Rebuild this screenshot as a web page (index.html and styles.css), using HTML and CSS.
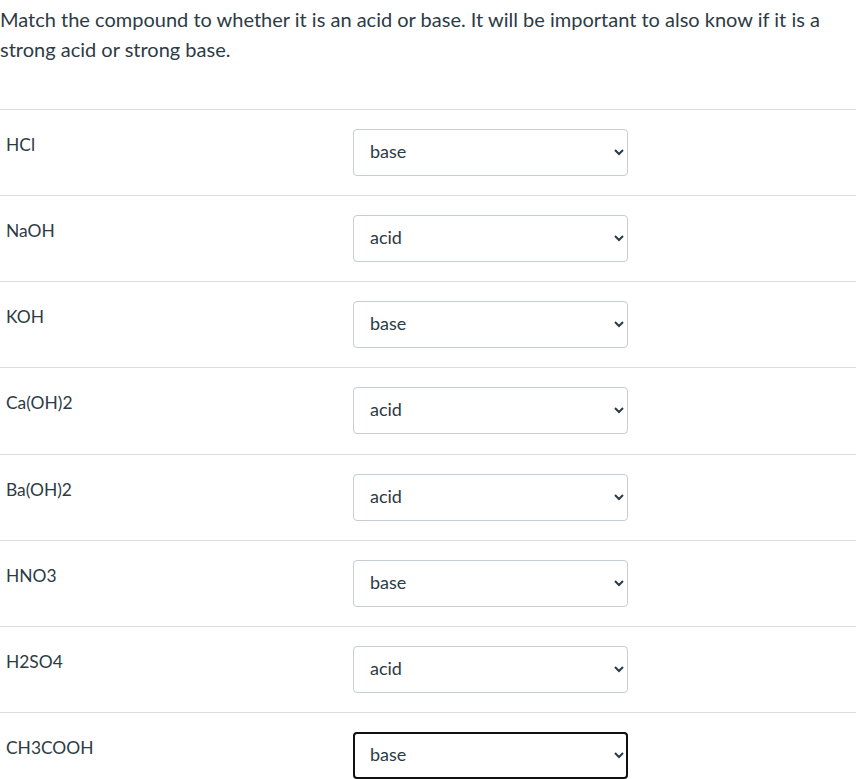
FILE: index.html
```html
<!DOCTYPE html>
<html lang="en">
<head>
    <meta charset="UTF-8">
    <meta name="viewport" content="width=device-width, initial-scale=1.0">
    <title>Matching Question</title>
    <link rel="stylesheet" href="styles.css">
</head>
<body>
    <div class="question">
        <div class="question-text">
            Match the compound to whether it is an acid or base. It will be important to also know if it is a strong acid or strong base.
        </div>
        <div class="answers">
            <div class="answer-row">
                <div class="answer-label">HCl</div>
                <select class="answer-select">
                    <option>base</option><option>acid</option>
                </select>
            </div>
            <div class="answer-row">
                <div class="answer-label">NaOH</div>
                <select class="answer-select">
                    <option>acid</option><option>base</option>
                </select>
            </div>
            <div class="answer-row">
                <div class="answer-label">KOH</div>
                <select class="answer-select">
                    <option>base</option><option>acid</option>
                </select>
            </div>
            <div class="answer-row">
                <div class="answer-label">Ca(OH)2</div>
                <select class="answer-select">
                    <option>acid</option><option>base</option>
                </select>
            </div>
            <div class="answer-row">
                <div class="answer-label">Ba(OH)2</div>
                <select class="answer-select">
                    <option>acid</option><option>base</option>
                </select>
            </div>
            <div class="answer-row">
                <div class="answer-label">HNO3</div>
                <select class="answer-select">
                    <option>base</option><option>acid</option>
                </select>
            </div>
            <div class="answer-row">
                <div class="answer-label">H2SO4</div>
                <select class="answer-select">
                    <option>acid</option><option>base</option>
                </select>
            </div>
            <div class="answer-row">
                <div class="answer-label">CH3COOH</div>
                <select class="answer-select focused">
                    <option>base</option><option>acid</option>
                </select>
            </div>
        </div>
    </div>
</body>
</html>
```
FILE: styles.css
```css
body {
    font-family: Lato, "Open Sans", sans-serif;
    margin: 0;
    color: #2d3b45;
    background-color: white;
}
.question-text {
    font-size: 20px;
    line-height: 30px;
    padding-top: 4px;
}
.answers {
    margin-top: 45px;
}
.answer-row {
    display: grid;
    grid-template-columns: 353px 275px;
    border-top: 1px solid #dddddd;
    padding: 19px 0 19px 0;
    height: 86.15px;
    box-sizing: border-box;
}
.answer-label {
    font-size: 17.4px;
    padding-left: 6px;
    padding-top: 5px;
}
.answer-select {
    height: 47px;
    font-family: Lato, sans-serif;
    font-size: 18px;
    color: #2d3b45;
    background-color: white;
    border: 1px solid #c7cdd1;
    border-radius: 4px;
    padding: 0 12px 3px 12px;
}
.answer-select.focused {
    outline: 2px solid #101010;
    outline-offset: -2px;
}
```
